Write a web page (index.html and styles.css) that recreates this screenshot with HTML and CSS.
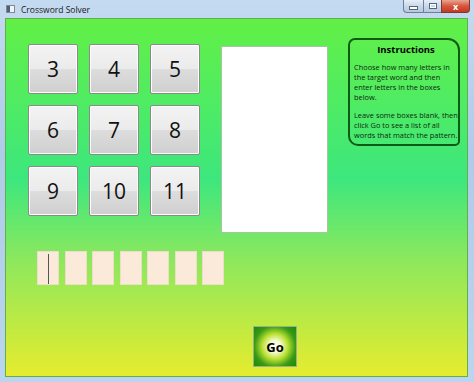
FILE: index.html
```html
<!DOCTYPE html>
<html lang="en">
<head>
    <meta charset="UTF-8">
    <meta name="viewport" content="width=device-width, initial-scale=1.0">
    <title>Crossword Solver</title>
    <link rel="stylesheet" href="styles.css">
</head>
<body>
    <div class="window">
        <div class="titlebar">
            <span class="app-icon"></span>
            <span class="title">Crossword Solver</span>
            <div class="caption-buttons">
                <span class="cap min"><i></i></span>
                <span class="cap max"><i></i></span>
                <span class="cap close">x</span>
            </div>
        </div>

        <div class="client">
            <div class="top-row">
                <div class="number-grid">
                    <button class="num">3</button>
                    <button class="num">4</button>
                    <button class="num">5</button>
                    <button class="num">6</button>
                    <button class="num">7</button>
                    <button class="num">8</button>
                    <button class="num">9</button>
                    <button class="num">10</button>
                    <button class="num">11</button>
                </div>

                <div class="word-list"></div>

                <div class="instructions">
                    <h3>Instructions</h3>
                    <p>Choose how many letters in the target word and then enter letters in the boxes below.</p>
                    <p>Leave some boxes blank, then click Go to see a list of all words that match the pattern.</p>
                </div>
            </div>

            <div class="letters">
                <span class="letter active"><i class="caret"></i></span>
                <span class="letter"></span>
                <span class="letter"></span>
                <span class="letter"></span>
                <span class="letter"></span>
                <span class="letter"></span>
                <span class="letter"></span>
            </div>

            <button class="go-btn">Go</button>
        </div>
    </div>
</body>
</html>
```

FILE: styles.css
```css
body {
    margin: 0;
    font-family: 'Open Sans', 'Noto Sans', sans-serif;
    background-color: #b9d1ea;
}
.window {
    width: 474px;
    height: 382px;
    background: linear-gradient(180deg, #c4daf0, #aecbe8 40%, #bcd5ee);
    box-sizing: border-box;
    padding: 0 6px 5px 5px;
    display: flex;
    flex-direction: column;
}
.titlebar {
    height: 18px;
    display: flex;
    align-items: center;
    position: relative;
}
.app-icon {
    width: 7px;
    height: 6px;
    border: 1px solid #7a8a9a;
    background: linear-gradient(90deg, #506070 40%, #f0f4f8 40%);
    margin-left: 1px;
}
.title {
    font-size: 8.5px;
    color: #1a1a1a;
    margin-left: 6px;
}
.caption-buttons {
    position: absolute;
    top: 0;
    right: -2px;
    display: flex;
}
.cap {
    height: 13px;
    border: 1px solid #6f7f95;
    border-top: none;
    box-sizing: border-box;
    display: flex;
    align-items: center;
    justify-content: center;
    background: linear-gradient(180deg, #e6eef8, #c9d8ea 50%, #b7c9df);
}
.min {
    width: 20px;
    border-radius: 0 0 0 4px;
    border-right: none;
}
.min i {
    width: 7px;
    height: 2px;
    background: #fff;
    border: 1px solid #55657a;
    margin-top: 4px;
}
.max {
    width: 18px;
    border-right: none;
}
.max i {
    width: 6px;
    height: 4px;
    border: 1px solid #55657a;
    box-shadow: inset 0 0 0 1px #fff;
}
.close {
    width: 29px;
    border-radius: 0 0 4px 0;
    background: linear-gradient(180deg, #e8a593, #d7563d 50%, #c5391f);
    color: #fff;
    font-size: 9px;
    font-weight: bold;
    border-color: #7a3a30;
}
.client {
    flex: 1;
    border: 1px solid #62b04c;
    background: linear-gradient(180deg, #62f046 0%, #3de77e 45%, #8ee85c 68%, #e6ec2e 100%);
    position: relative;
}
.top-row {
    display: flex;
    align-items: flex-start;
    padding-top: 19px;
}
.number-grid {
    display: grid;
    grid-template-columns: repeat(3, 50px);
    grid-auto-rows: 50px;
    gap: 11px;
    margin: 6px 0 0 22px;
}
.num {
    font-family: 'Open Sans', 'Noto Sans', sans-serif;
    font-size: 21px;
    color: #111;
    padding: 0;
    border: 1px solid #8a8a8a;
    border-radius: 2px;
    background: linear-gradient(180deg, #f3f3f3 0%, #ebebeb 50%, #dddddd 50%, #cfcfcf 100%);
    box-shadow: inset 0 0 0 1px #fcfcfc;
}
.word-list {
    width: 107px;
    height: 187px;
    margin: 8px 0 0 21px;
    background: #fff;
    box-sizing: border-box;
    border: 1px solid #a6c6a0;
}
.instructions {
    width: 112px;
    height: 108px;
    box-sizing: border-box;
    margin-left: 20px;
    border: 2px solid #0f5a14;
    border-radius: 7px 12px 5px 10px;
    padding: 3px 0 0 4px;
    color: #0c2a0c;
}
.instructions h3 {
    margin: 0 0 6px;
    font-size: 9.5px;
    font-weight: bold;
    text-align: center;
    color: #000;
}
.instructions p {
    margin: 0 0 8px;
    font-size: 7.4px;
    line-height: 10px;
}
.letters {
    display: flex;
    gap: 5.5px;
    margin: 18px 0 0 31px;
}
.letter {
    width: 22px;
    height: 34px;
    background: #fbe9da;
    box-sizing: border-box;
    border: 1px solid #f0dccb;
    position: relative;
}
.caret {
    position: absolute;
    left: 10px;
    top: 2px;
    width: 1px;
    height: 30px;
    background: #555;
}
.go-btn {
    display: block;
    width: 44px;
    height: 41px;
    margin: 41px 0 0 247px;
    padding: 0;
    border: 1px solid #9ab08a;
    background: radial-gradient(circle at 50% 50%, #ffffff 0%, #f4f8c8 22%, #b8e030 45%, #3a9a16 72%, #198a0a 100%);
    font-family: 'Open Sans', 'Noto Sans', sans-serif;
    font-size: 13px;
    font-weight: bold;
    color: #000;
}
```
